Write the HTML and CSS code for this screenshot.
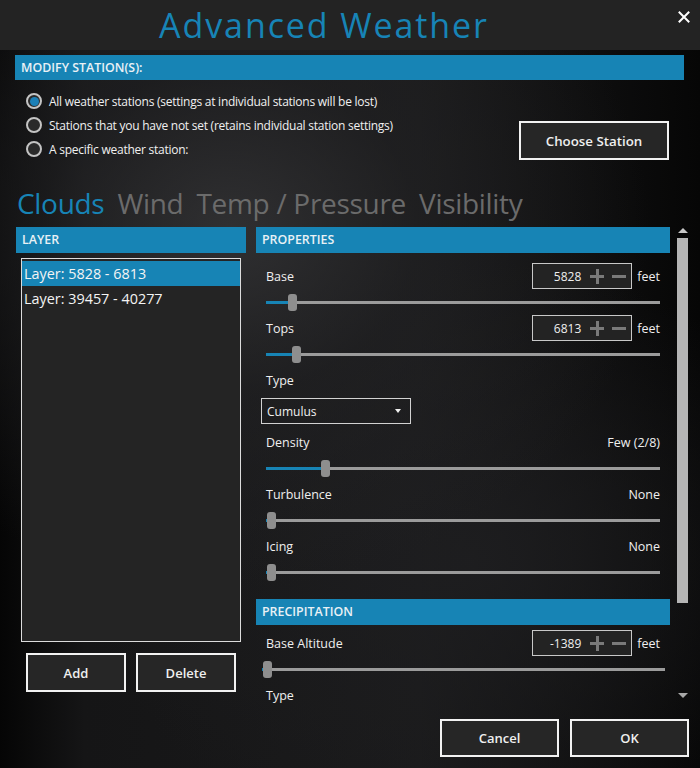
FILE: index.html
```html
<!DOCTYPE html>
<html lang="en">
<head>
<meta charset="utf-8">
<title>Advanced Weather</title>
<link rel="stylesheet" href="styles.css">
</head>
<body>
<div class="window">
  <header class="titlebar">
    <h1 class="title">Advanced Weather</h1>
    <button class="close" aria-label="Close">
      <svg width="12" height="12" viewBox="0 0 12 12"><path d="M1.5 1.5 L10.5 10.5 M10.5 1.5 L1.5 10.5" stroke="#fff" stroke-width="2" stroke-linecap="square"/></svg>
    </button>
  </header>

  <section class="modify">
    <div class="band">MODIFY STATION(S):</div>
    <div class="modify-body">
      <ul class="radios">
        <li class="radio checked"><span class="ring"></span>All weather stations (settings at individual stations will be lost)</li>
        <li class="radio"><span class="ring"></span>Stations that you have not set (retains individual station settings)</li>
        <li class="radio"><span class="ring"></span>A specific weather station:</li>
      </ul>
      <button class="btn choose">Choose Station</button>
    </div>
  </section>

  <nav class="tabs">
    <span class="tab active">Clouds</span>
    <span class="tab">Wind</span>
    <span class="tab">Temp / Pressure</span>
    <span class="tab">Visibility</span>
  </nav>

  <main class="main">
    <section class="layers">
      <div class="band">LAYER</div>
      <ul class="list">
        <li class="item selected">Layer: 5828 - 6813</li>
        <li class="item">Layer: 39457 - 40277</li>
      </ul>
      <div class="list-btns">
        <button class="btn small">Add</button>
        <button class="btn small">Delete</button>
      </div>
    </section>

    <section class="props">
      <div class="props-view">
        <div class="band">PROPERTIES</div>

        <div class="group first">
          <div class="row">
            <span class="label">Base</span>
            <div class="num"><span class="val">5828</span><span class="plus"></span><span class="minus"></span></div>
            <span class="unit">feet</span>
          </div>
          <div class="slider"><span class="fill" style="width:22px"></span><span class="thumb"></span><span class="track"></span></div>
        </div>

        <div class="group">
          <div class="row">
            <span class="label">Tops</span>
            <div class="num"><span class="val">6813</span><span class="plus"></span><span class="minus"></span></div>
            <span class="unit">feet</span>
          </div>
          <div class="slider"><span class="fill" style="width:26px"></span><span class="thumb"></span><span class="track"></span></div>
        </div>

        <div class="group">
          <div class="row"><span class="label">Type</span></div>
          <div class="select"><span class="sel-text">Cumulus</span><span class="caret"></span></div>
        </div>

        <div class="group">
          <div class="row"><span class="label">Density</span><span class="value">Few (2/8)</span></div>
          <div class="slider"><span class="fill" style="width:55px"></span><span class="thumb"></span><span class="track"></span></div>
        </div>

        <div class="group">
          <div class="row"><span class="label">Turbulence</span><span class="value">None</span></div>
          <div class="slider"><span class="fill" style="width:1px"></span><span class="thumb"></span><span class="track"></span></div>
        </div>

        <div class="group">
          <div class="row"><span class="label">Icing</span><span class="value">None</span></div>
          <div class="slider"><span class="fill" style="width:1px"></span><span class="thumb"></span><span class="track"></span></div>
        </div>

        <div class="band precip">PRECIPITATION</div>

        <div class="group tight">
          <div class="row">
            <span class="label">Base Altitude</span>
            <div class="num"><span class="val">-1389</span><span class="plus"></span><span class="minus"></span></div>
            <span class="unit">feet</span>
          </div>
          <div class="slider wide"><span class="fill" style="width:1px"></span><span class="thumb"></span><span class="track"></span></div>
        </div>

        <div class="group">
          <div class="row"><span class="label">Type</span></div>
        </div>
      </div>

      <div class="scrollbar">
        <span class="arrow up"></span>
        <span class="sb-thumb"></span>
        <span class="arrow down"></span>
      </div>
    </section>
  </main>

  <footer class="footer">
    <button class="btn action">Cancel</button>
    <button class="btn action">OK</button>
  </footer>
</div>
</body>
</html>
```

FILE: styles.css
```css
* { box-sizing: border-box; }

html, body {
  margin: 0;
  padding: 0;
}

body {
  width: 700px;
  height: 768px;
  overflow: hidden;
  font-family: "Open Sans", "Noto Sans", sans-serif;
  color: #ececec;
  background: #000;
}

.window {
  width: 700px;
  height: 768px;
  background:
    radial-gradient(ellipse 420px 360px at 230px 230px, rgba(52,52,54,0.85) 0%, rgba(34,34,36,0.6) 45%, rgba(0,0,0,0) 100%),
    radial-gradient(ellipse 380px 300px at 470px 560px, rgba(30,30,32,0.9) 0%, rgba(0,0,0,0) 100%),
    linear-gradient(90deg, #050505 0%, #151516 12%, #1a1a1b 60%, #060606 100%);
}

/* title bar */
.titlebar {
  height: 50px;
  background: #232323;
  display: flex;
  align-items: center;
  margin-bottom: 5px;
}

.title {
  flex: 1;
  margin: 0;
  padding-right: 24px;
  text-align: center;
  font-weight: 400;
  font-size: 34px;
  line-height: 50px;
  color: #1784b6;
  letter-spacing: 1.9px;
}

.close {
  width: 24px;
  height: 24px;
  margin: 0 4px 16px 0;
  padding: 0;
  border: 0;
  background: transparent;
  display: flex;
  align-items: center;
  justify-content: center;
}

/* bands */
.band {
  height: 26px;
  background: #1784b5;
  color: #e9f1f5;
  font-size: 12.4px;
  font-weight: 600;
  line-height: 26px;
  padding-left: 6px;
  text-transform: uppercase;
}

.modify {
  margin: 0 16px 0 15px;
}

.modify .band {
  height: 25px;
  line-height: 25px;
}

.modify-body {
  display: flex;
  justify-content: space-between;
  align-items: flex-start;
  padding-top: 9px;
}

.radios {
  list-style: none;
  margin: 0;
  padding: 0 0 0 11px;
}

.radio {
  height: 24px;
  display: flex;
  align-items: center;
  gap: 7px;
  font-size: 12px;
  letter-spacing: -0.25px;
  color: #f0f0f0;
}

.ring {
  width: 16px;
  height: 16px;
  border-radius: 50%;
  border: 2px solid #c4c4c4;
  background: #2a2a2a;
  display: flex;
  align-items: center;
  justify-content: center;
}

.radio.checked .ring::after {
  content: "";
  width: 9px;
  height: 9px;
  border-radius: 50%;
  background: #1b80b8;
}

.btn {
  font-family: inherit;
  background: #262626;
  border: 2px solid #f2f2f2;
  color: #efefef;
  font-weight: 600;
  font-size: 13px;
  padding: 0;
}

.choose {
  width: 150px;
  height: 39px;
  margin-top: 32px;
  margin-right: 15px;
  font-size: 13.3px;
}

/* tabs */
.tabs {
  display: flex;
  gap: 13px;
  height: 66px;
  padding: 25px 0 0 17px;
  font-size: 28px;
  line-height: 34px;
  letter-spacing: -0.3px;
}

.tab {
  color: #6b6b6b;
}

.tab.active {
  color: #1784b6;
}

/* main */
.main {
  display: flex;
  gap: 10px;
  padding-left: 16px;
  height: 479px;
}

.layers {
  width: 230px;
}

.list {
  list-style: none;
  margin: 5px 0 0 5px;
  padding: 2px 0 0;
  width: 220px;
  height: 384px;
  border: 1px solid #dcdcdc;
  background: #242424;
}

.item {
  height: 25px;
  line-height: 25px;
  padding-left: 2px;
  font-size: 14.4px;
  color: #f4f4f4;
}

.item.selected {
  background: #1784b5;
}

.list-btns {
  display: flex;
  gap: 10px;
  margin: 11px 0 0 10px;
}

.btn.small {
  width: 100px;
  height: 39px;
}

.props {
  display: flex;
  gap: 7px;
}

.props-view {
  width: 414px;
  height: 479px;
  overflow: hidden;
}

.group.first { margin-top: 10px; }
.group.tight { margin-top: 5px; }

.row {
  height: 26px;
  display: flex;
  align-items: center;
  padding: 0 10px;
  font-size: 12.5px;
  color: #efefef;
}

.label { flex: 1; }

.num {
  width: 100px;
  height: 26px;
  border: 1px solid #c8c8c8;
  background: #232323;
  display: flex;
  align-items: center;
  padding-right: 5px;
}

.val {
  flex: 1;
  text-align: right;
  margin-right: 9px;
  font-size: 12px;
}

.plus, .minus {
  width: 14px;
  height: 14px;
  position: relative;
}

.minus { margin-left: 8px; }

.plus::before, .minus::before {
  content: "";
  position: absolute;
  left: 0;
  top: 6px;
  width: 14px;
  height: 3px;
  background: #7a7a7a;
}

.plus::after {
  content: "";
  position: absolute;
  left: 5.5px;
  top: 0;
  width: 3px;
  height: 15px;
  background: #7a7a7a;
}

.unit {
  margin-left: 5px;
}

.slider {
  height: 26px;
  margin: 0 10px;
  display: flex;
  align-items: center;
}

.slider.wide {
  margin: 0 5px 0 6px;
}

.fill {
  height: 3px;
  background: #1784b5;
  flex: none;
}

.thumb {
  width: 9px;
  height: 17px;
  border-radius: 3px;
  background: #8e8e8e;
  flex: none;
}

.track {
  flex: 1;
  height: 3px;
  background: #9b9b9b;
}

.select {
  width: 150px;
  height: 26px;
  margin: 5px 0 5px 5px;
  border: 1px solid #d2d2d2;
  display: flex;
  align-items: center;
  justify-content: space-between;
  padding: 0 9px 0 5px;
  font-size: 12px;
  color: #f0f0f0;
}

.caret {
  width: 0;
  height: 0;
  border-left: 3.5px solid transparent;
  border-right: 3.5px solid transparent;
  border-top: 4px solid #f0f0f0;
}

.band.precip {
  margin-top: 14px;
}

/* scrollbar */
.scrollbar {
  width: 11px;
  height: 471px;
  display: flex;
  flex-direction: column;
  align-items: center;
  padding-top: 1px;
}

.arrow {
  width: 0;
  height: 0;
  border-left: 5.5px solid transparent;
  border-right: 5.5px solid transparent;
}

.arrow.up {
  border-bottom: 5px solid #c8c8c8;
}

.sb-thumb {
  width: 11px;
  height: 365px;
  margin-top: 5px;
  background: #b5b5b5;
}

.arrow.down {
  margin-top: auto;
  border-top: 5px solid #a8a8a8;
}

/* footer */
.footer {
  display: flex;
  justify-content: flex-end;
  gap: 11px;
  padding: 13px 11px 0 0;
}

.btn.action {
  width: 119px;
  height: 38px;
}
```
